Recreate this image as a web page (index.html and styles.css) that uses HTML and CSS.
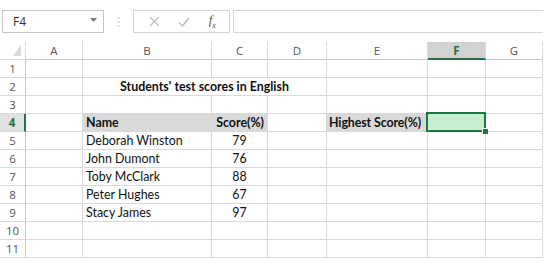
FILE: index.html
```html
<!DOCTYPE html>
<html lang="en">
<head>
    <meta charset="UTF-8">
    <title>Students' test scores in English</title>
    <link rel="stylesheet" href="styles.css">
</head>
<body>
    <!-- Formula bar -->
    <div class="formula-bar">
        <div class="name-box">
            <span>F4</span>
            <svg class="caret" width="7" height="4" viewBox="0 0 7 4"><path d="M0 0h7L3.5 4z" fill="#7a7a7a"/></svg>
        </div>
        <div class="grip">
            <svg width="3" height="12" viewBox="0 0 3 12">
                <rect x="1" y="1" width="1.4" height="1.4" fill="#c2c2c2"/>
                <rect x="1" y="5" width="1.4" height="1.4" fill="#c2c2c2"/>
                <rect x="1" y="9" width="1.4" height="1.4" fill="#c2c2c2"/>
            </svg>
        </div>
        <div class="fx-buttons">
            <svg width="11" height="11" viewBox="0 0 11 11"><path d="M1 1l9 9M10 1l-9 9" stroke="#bdbdbd" stroke-width="1.3" fill="none"/></svg>
            <svg width="12" height="10" viewBox="0 0 12 10"><path d="M1 5.5l3.5 3.5L11 1" stroke="#bdbdbd" stroke-width="1.4" fill="none"/></svg>
            <span class="fx">f<sub>x</sub></span>
        </div>
        <div class="formula-input"></div>
    </div>

    <!-- Sheet -->
    <div class="sheet">
        <div class="corner"><svg width="8" height="11" viewBox="0 0 8 11"><path d="M8 0v11H0z" fill="#d8d8d8"/></svg></div>
        <div class="ch">A</div>
        <div class="ch">B</div>
        <div class="ch">C</div>
        <div class="ch">D</div>
        <div class="ch">E</div>
        <div class="ch active">F</div>
        <div class="ch">G</div>

        <div class="rh">1</div>
        <div class="c"></div><div class="c"></div><div class="c"></div><div class="c"></div><div class="c"></div><div class="c"></div><div class="c"></div>

        <div class="rh">2</div>
        <div class="c"></div>
        <div class="c title">Students' test scores in English</div>
        <div class="c"></div><div class="c"></div><div class="c"></div>

        <div class="rh">3</div>
        <div class="c"></div><div class="c"></div><div class="c"></div><div class="c"></div><div class="c"></div><div class="c"></div><div class="c"></div>

        <div class="rh active">4</div>
        <div class="c"></div>
        <div class="c shade bold joined">Name</div>
        <div class="c shade bold right">Score(%)</div>
        <div class="c"></div>
        <div class="c shade bold tight">Highest Score(%)</div>
        <div class="c selected"></div>
        <div class="c"></div>

        <div class="rh">5</div>
        <div class="c"></div><div class="c">Deborah Winston</div><div class="c num">79</div><div class="c"></div><div class="c"></div><div class="c"></div><div class="c"></div>

        <div class="rh">6</div>
        <div class="c"></div><div class="c">John Dumont</div><div class="c num">76</div><div class="c"></div><div class="c"></div><div class="c"></div><div class="c"></div>

        <div class="rh">7</div>
        <div class="c"></div><div class="c">Toby McClark</div><div class="c num">88</div><div class="c"></div><div class="c"></div><div class="c"></div><div class="c"></div>

        <div class="rh">8</div>
        <div class="c"></div><div class="c">Peter Hughes</div><div class="c num">67</div><div class="c"></div><div class="c"></div><div class="c"></div><div class="c"></div>

        <div class="rh">9</div>
        <div class="c"></div><div class="c">Stacy James</div><div class="c num">97</div><div class="c"></div><div class="c"></div><div class="c"></div><div class="c"></div>

        <div class="rh">10</div>
        <div class="c"></div><div class="c"></div><div class="c"></div><div class="c"></div><div class="c"></div><div class="c"></div><div class="c"></div>

        <div class="rh">11</div>
        <div class="c"></div><div class="c"></div><div class="c"></div><div class="c"></div><div class="c"></div><div class="c"></div><div class="c"></div>
    </div>
</body>
</html>
```

FILE: styles.css
```css
/* General */
body {
    margin: 0;
    background: #ffffff;
    font-family: "Open Sans", sans-serif;
    color: #222222;
}

/* Formula bar */
.formula-bar {
    display: flex;
    padding: 10px 0 0 2px;
    height: 23px;
}

.name-box {
    box-sizing: border-box;
    width: 102px;
    height: 23px;
    border: 1px solid #c6c6c6;
    display: flex;
    align-items: center;
    justify-content: space-between;
    padding: 0 6px 0 10px;
    font-size: 12px;
    color: #333333;
}

.caret {
    margin-bottom: 4px;
}

.grip {
    width: 29px;
    display: flex;
    align-items: center;
    justify-content: center;
}

.fx-buttons {
    box-sizing: border-box;
    width: 97px;
    height: 23px;
    border: 1px solid #d4d4d4;
    display: flex;
    align-items: center;
    justify-content: space-around;
    padding: 0 4px 0 6px;
}

.fx {
    font-family: "Liberation Serif", serif;
    font-style: italic;
    font-size: 13px;
    color: #555555;
    line-height: 1;
}

.fx sub {
    font-size: 8px;
}

.formula-input {
    box-sizing: border-box;
    margin-left: 3px;
    width: 310px;
    height: 23px;
    border-top: 1px solid #d4d4d4;
    border-bottom: 1px solid #d4d4d4;
    border-left: 1px solid #d4d4d4;
}

/* Sheet grid */
.sheet {
    margin-top: 9px;
    display: grid;
    grid-template-columns: 26px 57px 129px 56px 59px 101px 58px 57px;
    grid-auto-rows: 18px;
    width: 543px;
}

.sheet > div {
    box-sizing: border-box;
    border-right: 1px solid #d9d9d9;
    border-bottom: 1px solid #d9d9d9;
    white-space: nowrap;
    overflow: visible;
}

.corner {
    display: flex;
    align-items: flex-end;
    justify-content: flex-end;
    padding: 0 4px 3px 0;
}

.ch,
.rh {
    font-family: "Open Sans", sans-serif;
    font-size: 11.5px;
    color: #555555;
    text-align: center;
    line-height: 17px;
}

.ch {
    border-bottom-color: #c8c8c8 !important;
}

.rh {
    border-right-color: #c8c8c8 !important;
}

.ch.active {
    background: #d2d2d2;
    color: #217346;
    font-weight: bold;
    border-bottom: 2px solid #217346 !important;
}

.rh.active {
    background: #e1e1e1;
    color: #217346;
    font-weight: bold;
    border-right: 2px solid #217346 !important;
}

/* Cells */
.c {
    font-family: Lato, "Liberation Sans", sans-serif;
    font-size: 12.4px;
    line-height: 18px;
    padding: 0 3px;
    color: #111111;
}

.title {
    grid-column: span 3;
    font-weight: bold;
    text-align: center;
}

.bold {
    font-weight: bold;
}

.tight {
    padding-left: 2px;
    letter-spacing: -0.1px;
}

.right {
    text-align: right;
}

.num {
    text-align: center;
}

.shade {
    background: #d9d9d9;
}

.joined {
    border-right-color: #d9d9d9 !important;
}

.selected {
    position: relative;
    background: #c6efce;
}

.selected::before {
    content: "";
    position: absolute;
    left: -2px;
    top: -2px;
    right: -1px;
    bottom: -1px;
    border: 2px solid #217346;
}

.selected::after {
    content: "";
    position: absolute;
    right: -3px;
    bottom: -3px;
    width: 5px;
    height: 5px;
    background: #217346;
    border: 1px solid #ffffff;
    border-right: 0;
    border-bottom: 0;
}
```
